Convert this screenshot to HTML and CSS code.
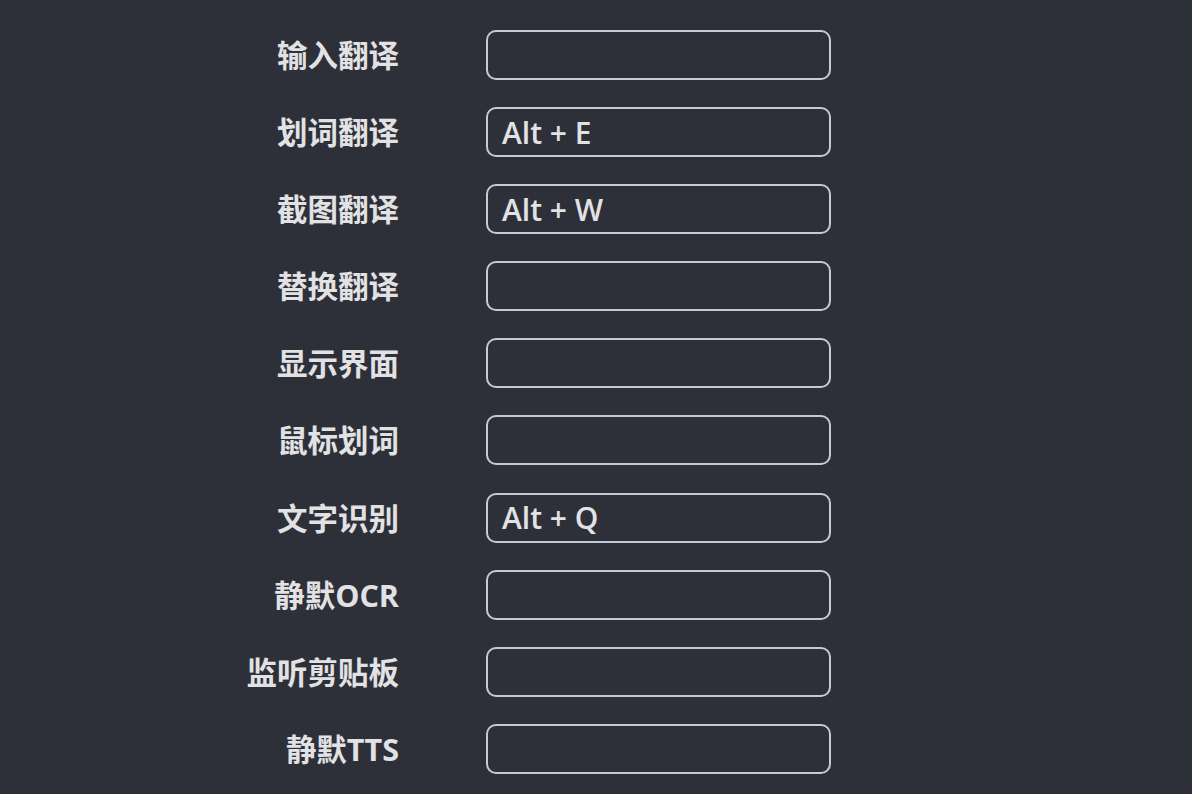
FILE: index.html
```html
<!DOCTYPE html>
<html lang="zh-CN">
<head>
<meta charset="utf-8">
<title>快捷键设置</title>
<link rel="stylesheet" href="styles.css">
</head>
<body>
<div class="form">
  <label class="label">输入翻译</label><div class="field"></div>
  <label class="label">划词翻译</label><div class="field">Alt + E</div>
  <label class="label">截图翻译</label><div class="field">Alt + W</div>
  <label class="label">替换翻译</label><div class="field"></div>
  <label class="label">显示界面</label><div class="field"></div>
  <label class="label">鼠标划词</label><div class="field"></div>
  <label class="label">文字识别</label><div class="field">Alt + Q</div>
  <label class="label">静默OCR</label><div class="field"></div>
  <label class="label">监听剪贴板</label><div class="field"></div>
  <label class="label">静默TTS</label><div class="field"></div>
</div>
</body>
</html>
```
FILE: styles.css
```css
html, body {
  margin: 0;
  padding: 0;
  background: #2e3039;
  height: 100%;
  overflow: hidden;
}
body {
  font-family: "Open Sans", "Noto Sans CJK SC", sans-serif;
  color: #e2e2e4;
}
.form {
  display: grid;
  grid-template-columns: 399px 345px;
  grid-auto-rows: 50px;
  column-gap: 87px;
  row-gap: 27.1px;
  padding-top: 30px;
}
.label {
  display: flex;
  align-items: center;
  justify-content: flex-end;
  font-size: 30.5px;
  font-weight: 700;
  padding-bottom: 2px;
}
.field {
  box-sizing: border-box;
  border: 2px solid #c3cbd6;
  border-radius: 10px;
  display: flex;
  align-items: center;
  padding-left: 14px;
  font-size: 30px;
  font-weight: 600;
}
```
